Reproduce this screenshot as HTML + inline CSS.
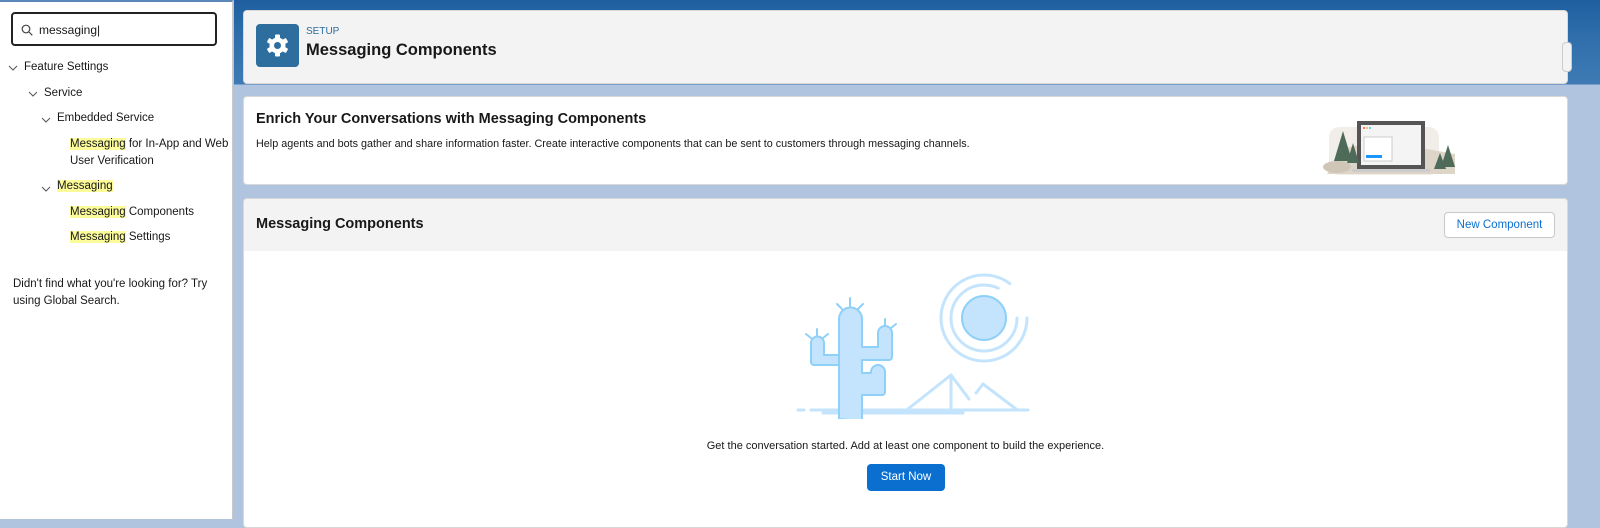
<!DOCTYPE html>
<html><head><meta charset="utf-8"><style>
*{box-sizing:border-box;margin:0;padding:0}
body{width:1600px;height:519px;overflow:hidden;font-family:"Liberation Sans",sans-serif;color:#181818;background:#b0c4df;position:relative}
.side{position:absolute;left:0;top:0;width:233px;height:519px;background:#fff;border-right:1px solid #c9c9c9;border-top:2px solid #5a86b8;font-size:11.5px}
.search{position:absolute;left:11px;top:10px;width:206px;height:34px;border:2px solid #222;border-radius:4px}
.search span{position:absolute;left:26px;top:9px;font-size:12px}
.it{position:absolute;white-space:nowrap;line-height:17px}
.hl{background:#fbfb9a}
.chev{position:absolute;width:10px;height:6px}
.bg{position:absolute;left:234px;top:0;right:0;height:92px;background:linear-gradient(#1f5fa0,#2f6eab 40%,#3e7bb5 92%,#b0c4df 92%)}
.card{position:absolute;left:243px;right:32px;border-radius:4px;border:1px solid #d8d8d8}
</style></head><body>
<div class="bg"></div>
<div class="side">
<div class="search"><svg style="position:absolute;left:8px;top:10px" width="12" height="12" viewBox="0 0 12 12"><circle cx="5" cy="5" r="3.8" fill="none" stroke="#444" stroke-width="1.2"/><path d="M8 8l3.3 3.3" stroke="#444" stroke-width="1.2"/></svg><span>messaging|</span></div>
<svg class="chev" style="left:8px;top:63px" viewBox="0 0 10 6"><path d="M1 1l4 4 4-4" fill="none" stroke="#555"/></svg><div class="it" style="left:24px;top:57px">Feature Settings</div>
<svg class="chev" style="left:28px;top:89px" viewBox="0 0 10 6"><path d="M1 1l4 4 4-4" fill="none" stroke="#555"/></svg><div class="it" style="left:44px;top:83px">Service</div>
<svg class="chev" style="left:41px;top:115px" viewBox="0 0 10 6"><path d="M1 1l4 4 4-4" fill="none" stroke="#555"/></svg><div class="it" style="left:57px;top:108px">Embedded Service</div>
<div class="it" style="left:70px;top:134px"><span class="hl">Messaging</span> for In-App and Web<br>User Verification</div>
<svg class="chev" style="left:41px;top:184px" viewBox="0 0 10 6"><path d="M1 1l4 4 4-4" fill="none" stroke="#555"/></svg><div class="it" style="left:57px;top:176px"><span class="hl">Messaging</span></div>
<div class="it" style="left:70px;top:202px"><span class="hl">Messaging</span> Components</div>
<div class="it" style="left:70px;top:227px"><span class="hl">Messaging</span> Settings</div>
<div class="it" style="left:13px;top:274px">Didn't find what you're looking for? Try<br>using Global Search.</div>
</div>
<div class="card" style="top:10px;height:74px;background:#f3f3f3;right:32px">
<div style="position:absolute;left:12px;top:13px;width:43px;height:43px;background:#2e6e9e;border-radius:4px"><svg width="43" height="43" viewBox="0 0 43 43"><g transform="translate(21.5 21.5)" fill="#fff"><circle r="8"/><g><rect x="-2.5" y="-11" width="5" height="22" rx="1"/><rect x="-2.5" y="-11" width="5" height="22" rx="1" transform="rotate(60)"/><rect x="-2.5" y="-11" width="5" height="22" rx="1" transform="rotate(120)"/></g><circle r="3.5" fill="#2e6e9e"/></g></svg></div>
<div style="position:absolute;left:62px;top:15px;font-size:10px;color:#2e6e9e">SETUP</div>
<div style="position:absolute;left:62px;top:30px;font-size:16.5px;font-weight:bold">Messaging Components</div>
</div>
<div style="position:absolute;left:1562px;top:42px;width:10px;height:30px;background:#f3f3f3;border:1px solid #ccc;border-radius:4px"></div>
<div class="card" style="top:96px;height:89px;background:#fff">
<div style="position:absolute;left:12px;top:14px;font-size:14.5px;font-weight:bold">Enrich Your Conversations with Messaging Components</div>
<div style="position:absolute;left:12px;top:41px;font-size:10.8px">Help agents and bots gather and share information faster. Create interactive components that can be sent to customers through messaging channels.</div>
<svg style="position:absolute;left:1073px;top:12px" width="150" height="70" viewBox="0 0 150 70"><rect x="12" y="18" width="110" height="48" rx="10" fill="#f1eeea"/><path d="M12 62L22 40 50 35 110 40 138 45 138 65 10 65Z" fill="#ddd5c8"/><rect x="40" y="12" width="68" height="48" fill="#555"/><rect x="44" y="16" width="60" height="40" fill="#f4f4f4"/><circle cx="47" cy="19" r="1" fill="#e55"/><circle cx="50" cy="19" r="1" fill="#eb4"/><circle cx="53" cy="19" r="1" fill="#4cc"/><rect x="47" y="28" width="28" height="24" fill="#fff" stroke="#ccc"/><rect x="49" y="46" width="16" height="3" fill="#1b96ff"/><rect x="35" y="60" width="78" height="3" fill="#ccc"/><path d="M27 52l-10 0 9-30 9 30z M37 54l-7 0 6-20 6 20z M132 58l-8 0 7-22 7 22z M124 60l-7 0 6-16 6 16z" fill="#4e6b5a"/><ellipse cx="20" cy="58" rx="14" ry="6" fill="#cfc6b8"/></svg>
</div>
<div class="card" style="top:198px;height:330px;background:#fff;overflow:hidden">
<div style="height:52px;background:#f3f3f3;position:relative"><div style="position:absolute;left:12px;top:17px;font-size:14.5px;font-weight:bold">Messaging Components</div>
<div style="position:absolute;right:12px;top:13px;width:111px;height:26px;border:1px solid #c9c9c9;border-radius:4px;background:#fff;color:#0b6fd0;font-size:11.5px;text-align:center;line-height:24px">New Component</div></div>
<svg style="position:absolute;left:526px;top:60px" width="300" height="160" viewBox="769 258 300 160" fill="none" stroke-linecap="round" stroke-linejoin="round">
<g stroke="#c3e4fc" stroke-width="3"><circle cx="983" cy="317" r="33" stroke-dasharray="170 40"/><circle cx="983" cy="317" r="43" stroke-dasharray="230 40"/><path d="M907 408L950 374 968 398 M950 374V408 M975 392L982 383 1015 408"/><path d="M797 409h6 M810 409h217 M822 412h140"/></g>
<circle cx="983" cy="317" r="22" fill="#c3e4fc" stroke="#8fd0f8" stroke-width="2"/>
<path d="M838 418V318a11.5 11.5 0 0 1 23 0V346h16v-14a7 7 0 0 1 14 0v24a3 3 0 0 1-3 3h-27v13h9v-1a7 7 0 0 1 14 0v20a3 3 0 0 1-3 3h-20v26z M838 364h-25a3 3 0 0 1-3-3V342a6.5 6.5 0 0 1 13 0v12h15" fill="#c3e4fc" stroke="#8fd0f8" stroke-width="2"/>
<g stroke="#8fd0f8" stroke-width="2"><path d="M849 305v-8 M841 308l-5-5 M857 308l5-5 M816 335v-7 M810 337l-5-4 M822 337l5-4 M884 325v-7 M890 327l5-4"/></g>
</svg>
<div style="position:absolute;left:0;right:0;top:241px;text-align:center;font-size:11px">Get the conversation started. Add at least one component to build the experience.</div>
<div style="position:absolute;left:623px;top:265px;width:78px;height:27px;background:#0b6fd0;border-radius:4px;color:#fff;font-size:11.5px;text-align:center;line-height:27px">Start Now</div>
</div>
</body></html>
